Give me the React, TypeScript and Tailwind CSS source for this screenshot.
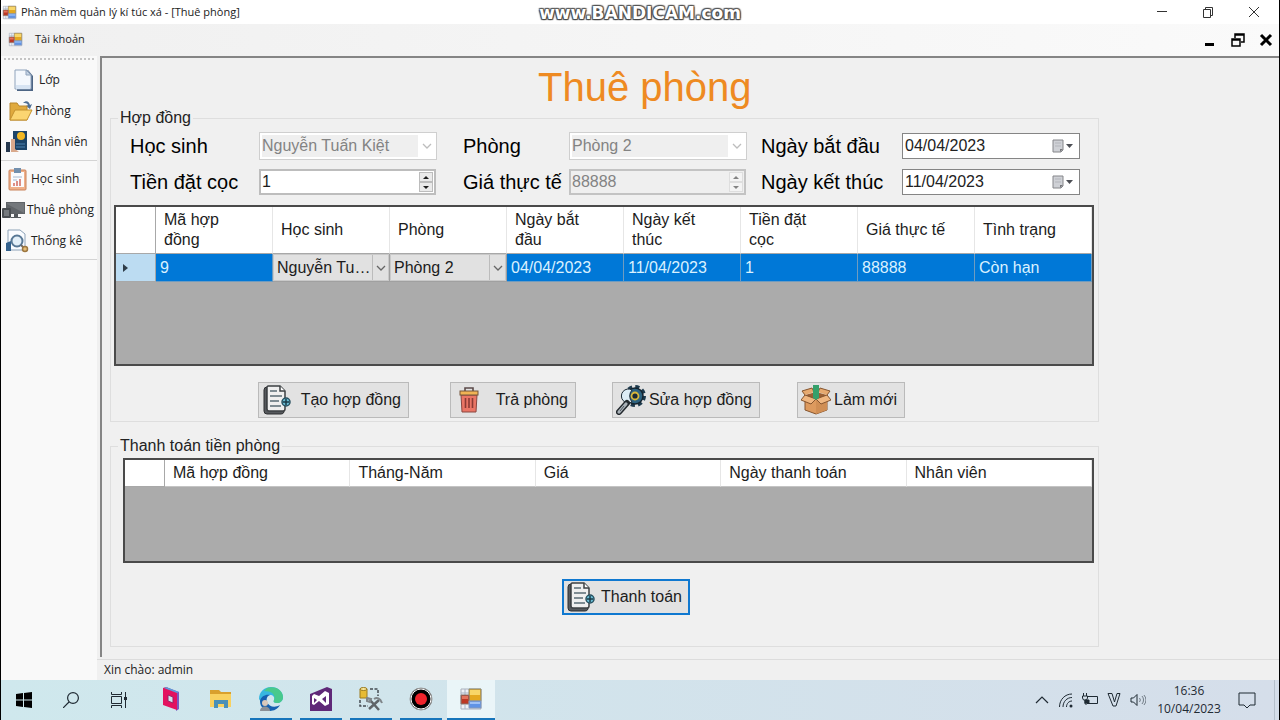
import type { ReactNode } from 'react';
import { clsx } from 'clsx';

type IconProps = { className?: string };

const FormIcon = ({ className }: IconProps) => (
  <svg viewBox="0 0 24 24" className={className} aria-hidden="true">
    <path d="M2 2h20v20H2z" fill="#eef1f6" stroke="#a9b0bc" />
    <path d="M2 6h8M6 2v6M6 18v4" stroke="#a9b4c4" />
    <path d="M10 2h12v12H10z" fill="#e4a820" stroke="#8d8a72" />
    <path d="M11 3h10v5H11z" fill="#f8d668" />
    <path d="M2 8h8v9H2z" fill="#bd3824" stroke="#84766f" />
    <path d="M3 9h6v3H3z" fill="#e2735c" />
    <path d="M10 14h12v7H10z" fill="#5f93e6" stroke="#8799b8" />
    <path d="M11 15h10v2H11z" fill="#9dc0f6" />
  </svg>
);

const PageIcon = () => (
  <svg viewBox="0 0 24 24" className="size-6" aria-hidden="true">
    <path d="M4 2h11l5 6v15H4z" fill="#4d6584" />
    <path d="M2 2h12l4 5v14H2z" fill="#f4f8fd" stroke="#8fa3bc" />
    <path d="M13 2v5h5z" fill="#c6d5e6" stroke="#8fa3bc" />
    <path d="M3 17h14v4H3z" fill="#d7e4f3" />
  </svg>
);

const FolderIcon = () => (
  <svg viewBox="0 0 24 24" className="size-6" aria-hidden="true">
    <path d="M14 4c3-3 6-2 7 2l2-1-2 5-4-3 2-1c-1-2-3-2-5-2z" fill="#4f6f94" />
    <path d="M1 4h7l2 3h8v14H1z" fill="#e0aa3e" stroke="#b8862c" />
    <path d="m1 21 5-10h17l-5 10z" fill="#fbd571" stroke="#c4922f" />
  </svg>
);

const StaffIcon = () => (
  <svg viewBox="0 0 24 24" className="size-6" aria-hidden="true">
    <path d="M8 1h14v19H8z" fill="#1c4468" />
    <circle cx="16" cy="6" r="4" fill="#f2b824" />
    <path d="M11 14h9M11 17h9" stroke="#4c82ae" />
    <path d="M1 12h4v10H1z" fill="#27394f" />
    <path d="M6 9h4v10l4 3H6z" fill="#d9a98c" />
  </svg>
);

const ClipboardIcon = () => (
  <svg viewBox="0 0 24 24" className="size-6" aria-hidden="true">
    <rect x="4" y="3" width="17" height="20" rx="1" fill="#efb08a" stroke="#c9835c" />
    <path d="M6 5h13v15H6z" fill="#fbfbfd" />
    <path d="M9 1h7v5H9z" fill="#7390ad" />
    <path d="M8 10h9M8 13h4" stroke="#a6bad0" />
    <path d="M9 19v-3M12 19v-5M15 19v-7" stroke="#d46a5e" strokeWidth="1.5" />
  </svg>
);

const MonitorIcon = () => (
  <svg viewBox="0 0 24 24" className="size-6" aria-hidden="true">
    <path d="M5 4h19v12H5z" fill="#606468" />
    <path d="M6 5h17v10L6 6z" fill="#74787c" />
    <path d="M13 16h4v3h3v1H10v-1h3z" fill="#55595d" />
    <rect x="1" y="10" width="9" height="10" rx="1" fill="#4b4f53" />
    <path d="M3 12h5v6H3z" fill="#75797d" />
  </svg>
);

const ReportIcon = () => (
  <svg viewBox="0 0 24 24" className="size-6" aria-hidden="true">
    <path d="M3 1h12l5 4v16H3z" fill="#fafcff" stroke="#8da2b7" />
    <path d="M1 22v-8l5-2v10z" fill="#33618c" />
    <circle cx="12" cy="12" r="5.5" fill="#e3eff8" stroke="#587895" strokeWidth="2" />
    <path d="m16 16 3 3" stroke="#6b6b6b" strokeWidth="2" />
    <circle cx="20" cy="20" r="2.5" fill="#e6bd76" stroke="#9c7640" strokeWidth="1.5" />
  </svg>
);

const ContractIcon = () => (
  <svg viewBox="0 0 30 30" className="size-[30px]" aria-hidden="true">
    <path d="M2 5a3 3 0 0 1 3-3v22h17v3a3 3 0 0 1-3 2H5a3 3 0 0 1-3-3z" fill="#56595d" stroke="#2d2f31" />
    <path d="M6 1h12l5 5v18a2 2 0 0 1-2 2H7a2 2 0 0 1-2-2V2z" fill="#efefef" stroke="#3d4043" strokeWidth="1.5" />
    <path d="M18 1v5h5" fill="#fff" stroke="#3d4043" strokeWidth="1.5" />
    <path d="M8 6h7M8 11h12M8 16h9M8 21h11" stroke="#5b6c76" strokeWidth="1.6" />
    <circle cx="24" cy="17" r="4" fill="#69bcd4" stroke="#28505f" strokeWidth="1.5" />
    <path d="M24 14v6M21 17h6" stroke="#1b3b48" strokeWidth="1.5" />
  </svg>
);

const TrashIcon = () => (
  <svg viewBox="0 0 30 30" className="size-[30px]" aria-hidden="true">
    <path d="M11 6V3h8v3" fill="none" stroke="#5b4a49" strokeWidth="1.6" />
    <path d="M7 10h16l-1 17H8z" fill="#ea7565" stroke="#8a4640" />
    <rect x="6" y="6" width="18" height="4" fill="#f0b354" stroke="#75543a" />
    <path d="M11.5 13v10M15 13v10M18.5 13v10" stroke="#8b3a34" strokeWidth="1.6" />
  </svg>
);

const GearSearchIcon = () => (
  <svg viewBox="0 0 30 30" className="size-[30px]" aria-hidden="true">
    <circle cx="19" cy="11" r="9" fill="none" stroke="#1d3a4d" strokeWidth="4" strokeDasharray="4 3.07" />
    <circle cx="19" cy="11" r="8" fill="#2c6280" stroke="#14232e" strokeWidth="1.5" />
    <path d="M16 5a7 7 0 1 0 0 12 9 9 0 0 1 0-12z" fill="#dcecf5" stroke="#1b2a35" />
    <circle cx="19" cy="11" r="3.5" fill="#1b2a35" stroke="#d9b93a" strokeWidth="1.8" />
    <path d="m11 18-8 9" stroke="#23292e" strokeWidth="6" strokeLinecap="round" />
    <path d="m10 19-7 8" stroke="#aab2b8" strokeWidth="3.2" strokeLinecap="round" />
    <path d="m8 21-4 5" stroke="#4d565d" />
  </svg>
);

const BoxIcon = () => (
  <svg viewBox="0 0 30 30" className="size-[30px]" aria-hidden="true">
    <path d="M4 10 15 7l11 3-11 5z" fill="#9b5f33" />
    <path d="M4 10v15l11 4 11-4V10l-11 4z" fill="#dd9a5e" stroke="#85552f" />
    <path d="M15 14v15l11-4V10z" fill="#d08e54" />
    <path d="m4 10-4 5 10 4 5-5z" fill="#efb680" stroke="#85552f" />
    <path d="m26 10 4 5-10 4-5-5z" fill="#efb680" stroke="#85552f" />
    <path d="M4 10 1 6l10-3 2 4M26 10l3-4-10-3-2 4" fill="#e6a96f" stroke="#85552f" />
    <path d="M12 0h6v13l-3 2-3-2z" fill="#35a06b" />
  </svg>
);

const Chevron = ({ className }: IconProps) => (
  <svg viewBox="0 0 10 6" className={clsx('h-[6px] w-[10px]', className)} fill="none" stroke="currentColor" strokeWidth="1.3" aria-hidden="true">
    <path d="m1 1 4 4 4-4" />
  </svg>
);

const toolbar = [
  [
    { name: 'Lớp', icon: <PageIcon />, pad: 'pl-3' },
    { name: 'Phòng', icon: <FolderIcon />, pad: 'pl-2' },
    { name: 'Nhân viên', icon: <StaffIcon />, pad: 'pl-1' },
  ],
  [
    { name: 'Học sinh', icon: <ClipboardIcon />, pad: 'pl-1' },
    { name: 'Thuê phòng', icon: <MonitorIcon />, pad: 'pl-0' },
    { name: 'Thống kê', icon: <ReportIcon />, pad: 'pl-1' },
  ],
];

const contractColumns = ['Mã hợp đồng', 'Học sinh', 'Phòng', 'Ngày bắt đầu', 'Ngày kết thúc', 'Tiền đặt cọc', 'Giá thực tế', 'Tình trạng'];
const paymentColumns = ['Mã hợp đồng', 'Tháng-Năm', 'Giá', 'Ngày thanh toán', 'Nhân viên'];

function Label({ htmlFor, children }: { htmlFor: string; children: ReactNode }) {
  return (
    <label htmlFor={htmlFor} className="text-xl leading-9 text-black">
      {children}
    </label>
  );
}

function ComboBox({ id, value }: { id: string; value: string }) {
  return (
    <div className="flex h-[28px] w-[178px] items-center border border-[#cfcfcf] bg-white p-[2px] text-[#bdbdbd]">
      <select id={id} disabled className="h-full min-w-0 flex-1 appearance-none bg-[#efefef] text-base leading-5 text-[#838383] opacity-100">
        <option>{value}</option>
      </select>
      <Chevron className="mr-[2px] ml-1" />
    </div>
  );
}

function NumberBox({ id, value, disabled }: { id: string; value: string; disabled?: boolean }) {
  return (
    <div
      className={clsx(
        'flex h-[26px] w-[177px] items-center border-2 p-px',
        disabled ? 'border-[#c3c3c3] bg-[#efefef] text-[#838383]' : 'border-[#bdbdbd] bg-white text-[#1c1c1c]'
      )}
    >
      <input id={id} type="text" inputMode="numeric" defaultValue={value} disabled={disabled} className="min-w-0 flex-1 text-base leading-5" />
      <div className="flex h-full w-[14px] flex-col">
        {['M1 4 4 1l3 3z', 'M1 1l3 3 3-3z'].map((d, i) => (
          <button
            key={d}
            type="button"
            disabled={disabled}
            aria-label={i === 0 ? 'Tăng' : 'Giảm'}
            className={clsx('flex flex-1 items-center justify-center border', disabled ? 'border-[#dedede] bg-[#f4f4f4]' : 'border-[#bcbcbc] bg-[#eaeaea]')}
          >
            <svg viewBox="0 0 8 5" className="h-[5px] w-2" fill="currentColor">
              <path d={d} />
            </svg>
          </button>
        ))}
      </div>
    </div>
  );
}

function DateBox({ id, value }: { id: string; value: string }) {
  return (
    <div className="flex h-[26px] w-[178px] items-center border border-[#858585] bg-white pl-[2px]">
      <input id={id} type="text" defaultValue={value} className="min-w-0 flex-1 text-base leading-5 text-[#222]" />
      <button type="button" aria-label="Mở lịch" className="flex items-center px-1">
        <svg viewBox="0 0 24 14" className="h-[14px] w-6">
          <path d="M2 1h10v10l-2 2H2z" fill="#cfd1d6" stroke="#85868a" />
          <path d="M4 4h6M4 7h6" stroke="#b3b5bb" />
          <path d="M12 10H9v3z" fill="#76777b" />
          <path d="M15 5h7l-3.5 4z" fill="#4d4f55" />
        </svg>
      </button>
    </div>
  );
}

function ActionButton({ icon, width, primary, children }: { icon: ReactNode; width: string; primary?: boolean; children: ReactNode }) {
  return (
    <button
      type="button"
      className={clsx(
        'flex h-9 items-center justify-between bg-[#e2e2e2] text-base text-[#1c1c1c]',
        primary ? 'border-2 border-[#0f78d0] pl-[2px] pr-[6px]' : 'border border-[#bababa] pl-[3px] pr-[7px]',
        width
      )}
    >
      {icon}
      {children}
    </button>
  );
}

function GridSelect({ label, value }: { label: string; value: string }) {
  return (
    <div className="flex h-[27px] items-center border border-[#c9c9c9] bg-[#e1e1e1] text-[#666]">
      <select aria-label={label} className="h-full min-w-0 flex-1 appearance-none overflow-hidden pl-[3px] text-base text-ellipsis whitespace-nowrap text-[#1c1c1c]">
        <option>{value}</option>
      </select>
      <span className="flex h-full w-4 items-center justify-center border-l border-[#bcbcbc]">
        <Chevron />
      </span>
    </div>
  );
}

function ContractTable() {
  return (
    <div className="h-[161px] border-2 border-[#4a4a4a] bg-[#ababab]">
      <table className="w-full table-fixed border-separate border-spacing-0 text-left text-base text-[#1c1c1c]">
        <thead>
          <tr className="h-[47px] bg-white">
            <th className="w-10 border-r border-b border-[#a8a8a8]"></th>
            {contractColumns.map((name) => (
              <th key={name} className="border-r border-b border-r-[#e6e6e6] border-b-[#a8a8a8] p-0 pr-6 pl-2 leading-5 font-normal">
                {name}
              </th>
            ))}
          </tr>
        </thead>
        <tbody>
          <tr className="h-7 bg-[#0078d7] text-[#d9f1ff]">
            <td className="border-r border-b border-[#a8a8a8] bg-[#bcdcf2] p-0 pl-[7px]">
              <svg viewBox="0 0 6 8" className="h-2 w-[6px]">
                <path d="M0 0l5 4-5 4z" fill="#2f3d49" />
              </svg>
            </td>
            <td className="border-r border-b border-[#6f9cc0] p-0 pl-1">9</td>
            <td className="border-r border-b border-[#a0a0a0] p-0">
              <GridSelect label="Học sinh" value="Nguyễn Tuấn Kiệt" />
            </td>
            <td className="border-r border-b border-[#a0a0a0] p-0">
              <GridSelect label="Phòng" value="Phòng 2" />
            </td>
            {['04/04/2023', '11/04/2023', '1', '88888', 'Còn hạn'].map((cell) => (
              <td key={cell} className="border-r border-b border-[#6f9cc0] p-0 pl-1">
                {cell}
              </td>
            ))}
          </tr>
        </tbody>
      </table>
    </div>
  );
}

function PaymentTable() {
  return (
    <div className="h-[105px] border-2 border-[#4a4a4a] bg-[#ababab]">
      <table className="w-full table-fixed border-separate border-spacing-0 text-left text-base text-[#1c1c1c]">
        <thead>
          <tr className="h-[27px] bg-white">
            <th className="w-10 border-r border-b border-[#a8a8a8]"></th>
            {paymentColumns.map((name) => (
              <th key={name} className="border-r border-b border-r-[#e6e6e6] border-b-[#c4c4c4] p-0 pl-2 leading-5 font-normal">
                {name}
              </th>
            ))}
          </tr>
        </thead>
      </table>
    </div>
  );
}

function TitleBar() {
  return (
    <header className="relative flex h-6 items-center bg-white pl-px">
      <FormIcon className="size-[15px]" />
      <span className="ml-1 flex-1 text-[11px] text-[#222]">Phần mềm quản lý kí túc xá - [Thuê phòng]</span>
      <span className="absolute top-[3px] left-1/2 -translate-x-1/2 font-['DejaVu_Sans',sans-serif] text-[17px] leading-5 font-bold text-white [text-shadow:1px_1px_1px_#444,-1px_-1px_1px_#555,1px_-1px_1px_#555,-1px_1px_1px_#444,0_0_2px_#555]">
        www.BANDICAM.com
      </span>
      <div className="flex pr-[2px] text-[#333]">
        <button type="button" aria-label="Thu nhỏ" className="flex w-[46px] justify-center">
          <svg viewBox="0 0 12 12" className="size-3" stroke="currentColor"><path d="M1 5.5h10" /></svg>
        </button>
        <button type="button" aria-label="Khôi phục" className="flex w-[46px] justify-center">
          <svg viewBox="0 0 12 12" className="size-3" fill="none" stroke="currentColor"><path d="M1.5 3.500h7v8h-7zM3.5 3V1.500h7v8H9" /></svg>
        </button>
        <button type="button" aria-label="Đóng" className="flex w-[46px] justify-center">
          <svg viewBox="0 0 12 12" className="size-3" stroke="currentColor"><path d="m1 1 10 10M11 1 1 11" /></svg>
        </button>
      </div>
    </header>
  );
}

function MenuBar() {
  return (
    <nav className="flex h-8 items-center bg-linear-to-r from-[#f0f0f0] to-[#fafafa] pb-px pl-[7px]">
      <FormIcon className="size-[15px]" />
      <a href="#account" className="ml-3 flex-1 text-[11px] text-[#222]">Tài khoản</a>
      <div className="flex gap-[14px] pr-[6px] text-black">
        <button type="button" aria-label="Thu nhỏ cửa sổ con">
          <svg viewBox="0 0 14 14" className="size-[14px]"><path d="M2 10h9v3H2z" /></svg>
        </button>
        <button type="button" aria-label="Khôi phục cửa sổ con">
          <svg viewBox="0 0 14 14" className="size-[14px]" fill="none" stroke="currentColor" strokeWidth="1.5"><path d="M1 6h8v7H1zM4 5V1h9v8h-3M4 2h9M1 7h8" /></svg>
        </button>
        <button type="button" aria-label="Đóng cửa sổ con">
          <svg viewBox="0 0 14 14" className="size-[14px]" stroke="currentColor" strokeWidth="3"><path d="m2 2 10 10M12 2 2 12" /></svg>
        </button>
      </div>
    </nav>
  );
}

const pinned = [
  {
    name: 'Opera GX',
    running: false,
    icon: (
      <svg viewBox="0 0 24 24" className="size-6">
        <path d="m7 0 13 5v17l-3 2V8z" fill="#7a5ac0" />
        <path d="m4 1 3-1 11 5v18L4 18z" fill="#e3125f" />
        <path d="m9 8 5 2v6l-5-2z" fill="#cfe8ee" stroke="#9c1f66" />
        <path d="m7 0 13 5-2 1L5 1z" fill="#5aa0dc" />
      </svg>
    ),
  },
  {
    name: 'File Explorer',
    running: false,
    icon: (
      <svg viewBox="0 0 24 24" className="size-6">
        <path d="M1 3h9l2 2h10v5H1z" fill="#d9a02d" />
        <path d="M1 7h21v13H1z" fill="#f9d15f" />
        <path d="M5 21v-8h14v8h-4v-4H9v4z" fill="#4a90b8" />
      </svg>
    ),
  },
  {
    name: 'Edge',
    running: true,
    icon: (
      <svg viewBox="0 0 24 24" className="size-6">
        <path d="M0 12C0 5 5 0 12 0s12 5 12 10c0 4-3 6-6 6s-4-1-3-3c1-3-1-5-4-5-5 0-8 3-9 7z" fill="#37b7e0" />
        <path d="M8 1c9-3 16 3 16 9 0 4-3 6-6 6s-4-1-3-3c2-5-2-9-10-9z" fill="#48c98c" />
        <path d="M1 14c1-5 6-7 10-6-3 1-4 4-3 7 2 5 8 6 13 3-4 7-12 7-16 4-3-2-4-5-4-8z" fill="#1560b0" />
        <circle cx="6" cy="16" r="3" fill="#d9c9bb" />
        <path d="M1 24c0-6 10-6 10 0z" fill="#8a8f96" />
      </svg>
    ),
  },
  {
    name: 'Visual Studio',
    running: true,
    icon: (
      <svg viewBox="0 0 24 24" className="size-6">
        <path d="M1 7 18 0l5 2v22H1z" fill="#5f2878" />
        <path d="M3 9v8l2 1 5-4 6 5 4-2V6l-4-2-6 5-5-2zm2 2 3 2-3 3zm12-2v7l-4-4z" fill="#fff" fillRule="evenodd" />
      </svg>
    ),
  },
  {
    name: 'SQL Server Management Studio',
    running: true,
    icon: (
      <svg viewBox="0 0 24 24" className="size-6" fill="none">
        <path d="M1 2h7v9H1z" fill="#e6bb35" stroke="#9b7a1e" />
        <ellipse cx="4.5" cy="2" rx="3.5" ry="1.5" fill="#f9e79a" stroke="#9b7a1e" />
        <path d="M11 2h8v7M1 13v6h8" stroke="#444b52" strokeDasharray="3 1.5" strokeWidth="1.5" />
        <path d="m10 22 10-9M11 13l9 10" stroke="#5f6468" strokeWidth="2.5" />
        <path d="M15 12c3-2 6-1 8 4M8 11l4 1-1 3-3-1z" stroke="#7f8589" strokeWidth="2" />
      </svg>
    ),
  },
  {
    name: 'Bandicam',
    running: true,
    icon: (
      <svg viewBox="0 0 24 24" className="size-6">
        <circle cx="12" cy="12" r="11" fill="#000" stroke="#999" />
        <circle cx="12" cy="12" r="10" fill="none" stroke="#fff" />
        <circle cx="12" cy="12" r="6" fill="#f0232b" />
      </svg>
    ),
  },
];

function Taskbar() {
  return (
    <footer className="flex h-10 items-stretch bg-linear-to-r from-[#cfe8ed] to-[#d5deea] text-[#1f2a33]">
      <button type="button" aria-label="Start" className="flex w-[46px] items-center justify-center">
        <svg viewBox="0 0 16 16" className="size-4" fill="#000"><path d="m0 2 7-1v6.500H0zM8 1l8-1v7.500H8zM0 8.500h7V15l-7-1zM8 8.500h8V16l-8-1z" /></svg>
      </button>
      <button type="button" aria-label="Tìm kiếm" className="flex w-12 items-center justify-center">
        <svg viewBox="0 0 16 16" className="size-4" fill="none" stroke="currentColor" strokeWidth="1.2"><circle cx="10" cy="6" r="5.4" /><path d="m6 10-6 6" /></svg>
      </button>
      <button type="button" aria-label="Chế độ xem tác vụ" className="flex w-12 items-center justify-center">
        <svg viewBox="0 0 16 16" className="size-4" fill="none" stroke="currentColor"><path d="M.5 0v2.500h10V0M.5 16v-2.500h10V16M.5 4.500h10v7H.5zM14.500 0v5M14.500 8v8" /><path d="M13 5h3v3h-3z" fill="currentColor" stroke="none" /></svg>
      </button>
      <div className="flex gap-2 pl-[7px]">
        {pinned.map((app) => (
          <button
            key={app.name}
            type="button"
            aria-label={app.name}
            className={clsx('flex w-[42px] items-center justify-center border-b-2', app.running ? 'border-[#1775bb]' : 'border-transparent')}
          >
            {app.icon}
          </button>
        ))}
      </div>
      <button type="button" aria-label="Phần mềm quản lý kí túc xá" className="ml-[5px] flex w-12 items-center justify-center border-b-2 border-[#1775bb] bg-[#eaf5f8]">
        <FormIcon className="size-6" />
      </button>
      <div className="ml-auto flex items-center gap-2">
        <svg viewBox="0 0 16 16" className="size-4" fill="none" stroke="currentColor" strokeWidth="1.2"><path d="m2 11 6-6 6 6" /></svg>
        <svg viewBox="0 0 16 16" className="size-4" fill="none" stroke="currentColor">
          <path d="M1.500 15C1.500 7.500 7 2 14 2M5 15c0-5.500 4-9.500 9-9.500M8.500 15c0-3.500 2.500-6 5.500-6" />
          <circle cx="13" cy="14" r="1.5" fill="currentColor" stroke="none" />
        </svg>
        <svg viewBox="0 0 16 16" className="size-4" fill="none" stroke="currentColor"><path d="M6 4.500h9.500v7H5M1.500 1v3M4.500 1v3M.5 4h5v2l-1 2h-3l-1-2zM3 8v4h2" /><path d="M3 8h4v3H3z" fill="currentColor" /></svg>
        <svg viewBox="0 0 16 16" className="size-4" fill="none" stroke="currentColor"><path d="M2 1.500h4L8.500 10 11 1.500h3L10 14H7z" /></svg>
        <svg viewBox="0 0 16 16" className="size-4" fill="none" stroke="currentColor"><path d="M1 6h2.500L7 2.500v11L3.500 10H1z" /><path d="M9.500 6a3 3 0 0 1 0 4M12 4a6 6 0 0 1 0 8M14 3a8 8 0 0 1 0 10" opacity=".55" /></svg>
      </div>
      <div className="ml-2 flex w-[70px] flex-col justify-center text-center text-xs leading-[18px]">
        <span>16:36</span>
        <span>10/04/2023</span>
      </div>
      <button type="button" aria-label="Thông báo" className="mx-[14px] flex w-[18px] items-center">
        <svg viewBox="0 0 18 18" className="size-[18px]" fill="none" stroke="currentColor"><path d="M1 2h16v12h-5l-3 3-3-3H1z" /></svg>
      </button>
      <div className="ml-1 w-[5px] border-l border-[#b5c0cc]"></div>
    </footer>
  );
}

export default function App() {
  return (
    <div className="flex min-h-screen flex-col border-x border-black bg-[#f0f0f0] font-['Open_Sans',sans-serif]">
      <TitleBar />
      <MenuBar />
      <div className="flex flex-1">
        <aside className="w-24 bg-[#f9f9f9] text-xs text-[#222]">
          <div className="mx-[3px] mt-[2px] mb-1 border-t-2 border-dotted border-[#c4c4c4]"></div>
          {toolbar.map((group) => (
            <div key={group[0].name} className="mb-[2px] flex flex-col border-b border-[#d4d4d4] pb-[3px]">
              {group.map((item) => (
                <button key={item.name} type="button" className={clsx('flex h-[31px] items-center gap-[2px] whitespace-nowrap', item.pad)}>
                  {item.icon}
                  {item.name}
                </button>
              ))}
            </div>
          ))}
        </aside>

        <div className="flex flex-1 flex-col">
          <main className="ml-[3px] flex-1 border-t-2 border-l-2 border-[#858585] pl-2 font-['Liberation_Sans',Arial,sans-serif]">
            <h1 className="pt-2 pl-[428px] text-[40px] leading-[42px] text-[#ee8a22]">Thuê phòng</h1>

            <fieldset className="w-[989px] border border-[#dedede] pr-1 pb-[3px] pl-[3px]">
              <legend className="ml-1 px-[2px] text-base leading-5 text-[#222]">Hợp đồng</legend>
              <div className="grid auto-rows-[36px] grid-cols-[129px_204px_106px_192px_141px_178px] items-center pb-[5px] pl-4">
                <Label htmlFor="student">Học sinh</Label>
                <ComboBox id="student" value="Nguyễn Tuấn Kiệt" />
                <Label htmlFor="room">Phòng</Label>
                <ComboBox id="room" value="Phòng 2" />
                <Label htmlFor="start">Ngày bắt đầu</Label>
                <DateBox id="start" value="04/04/2023" />
                <Label htmlFor="deposit">Tiền đặt cọc</Label>
                <NumberBox id="deposit" value="1" />
                <Label htmlFor="price">Giá thực tế</Label>
                <NumberBox id="price" value="88888" disabled />
                <Label htmlFor="end">Ngày kết thúc</Label>
                <DateBox id="end" value="11/04/2023" />
              </div>
              <ContractTable />
              <div className="mt-4 grid grid-cols-[192px_162px_185px_108px] pl-36">
                <ActionButton icon={<ContractIcon />} width="w-[151px]">Tạo hợp đồng</ActionButton>
                <ActionButton icon={<TrashIcon />} width="w-[126px]">Trả phòng</ActionButton>
                <ActionButton icon={<GearSearchIcon />} width="w-[148px]">Sửa hợp đồng</ActionButton>
                <ActionButton icon={<BoxIcon />} width="w-[108px]">Làm mới</ActionButton>
              </div>
            </fieldset>

            <fieldset className="mt-[14px] w-[989px] border border-[#dedede] pr-1 pb-[31px] pl-3">
              <legend className="-ml-[5px] px-[2px] text-base leading-5 text-[#222]">Thanh toán tiền phòng</legend>
              <div className="pt-[2px]">
                <PaymentTable />
              </div>
              <div className="mt-4 pl-[439px]">
                <ActionButton icon={<ContractIcon />} width="w-[128px]" primary>Thanh toán</ActionButton>
              </div>
            </fieldset>
          </main>
          <div className="mt-[2px] border-t border-[#dcdcdc] pl-[7px] text-xs leading-5 text-[#222]">Xin chào: admin</div>
        </div>
      </div>
      <Taskbar />
    </div>
  );
}
